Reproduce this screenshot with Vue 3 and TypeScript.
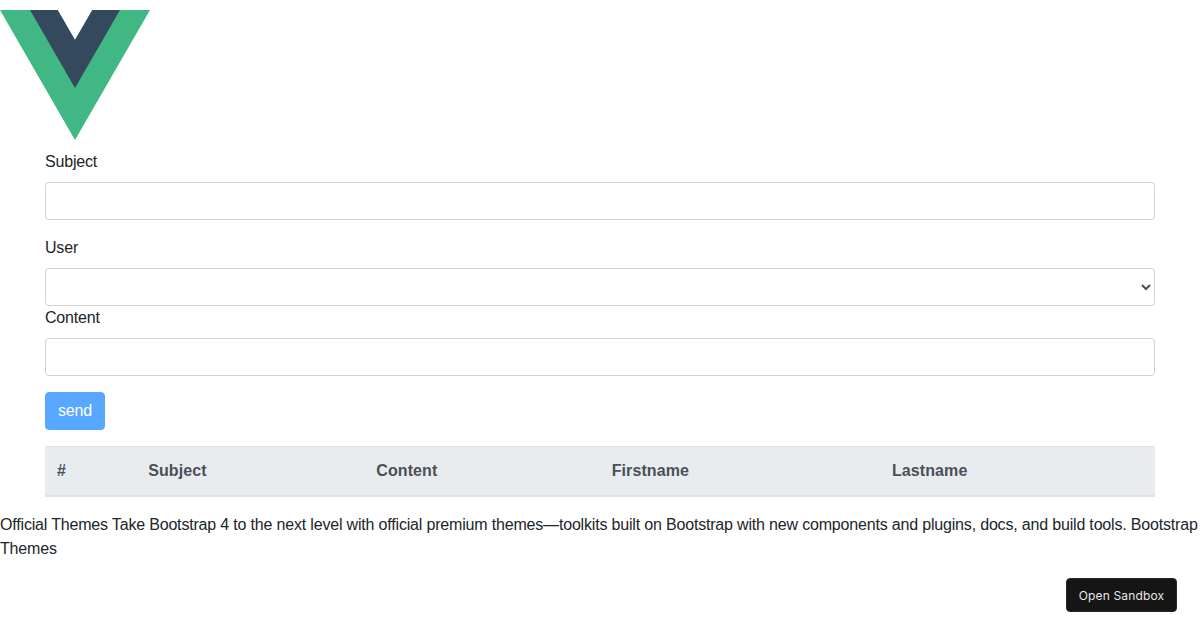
<script setup lang="ts">
const columns: string[] = ['#', 'Subject', 'Content', 'Firstname', 'Lastname']
</script>

<template>
  <div class="page">
    <svg class="logo" viewBox="0 0 261.76 226.69" role="img" aria-label="Vue logo">
      <path d="M161.096.001l-30.225 52.351L100.647.001H-.005l130.877 226.688L261.749.001z" fill="#41b883" />
      <path d="M161.096.001l-30.225 52.351L100.647.001H52.346l78.526 136.01L209.398.001z" fill="#34495e" />
    </svg>

    <div class="container">
      <form @submit.prevent>
        <div class="form-group">
          <label for="subject">Subject</label>
          <input id="subject" class="control" type="text" />
        </div>
        <label for="user">User</label>
        <select id="user" class="control"></select>
        <div class="form-group">
          <label for="content">Content</label>
          <input id="content" class="control" type="text" />
        </div>
        <button class="send" type="submit" disabled>send</button>
      </form>

      <table class="table">
        <thead>
          <tr>
            <th v-for="column in columns" :key="column">{{ column }}</th>
          </tr>
        </thead>
      </table>
    </div>

    <p class="note">Official Themes Take Bootstrap 4 to the next level with official premium themes—toolkits built on Bootstrap with new components and plugins, docs, and build tools. Bootstrap Themes</p>

    <button class="sandbox" type="button">Open Sandbox</button>
  </div>
</template>

<style>
html, body {
  margin: 0;
  background: #fff;
}
</style>

<style scoped>
.page {
  font-family: "Liberation Sans", Arial, sans-serif;
  font-size: 16px;
  line-height: 1.5;
  color: #212529;
  letter-spacing: -0.18px;
}

.logo {
  display: block;
  width: 150px;
  height: 150px;
}

.container {
  width: 1110px;
  margin: 0 auto;
}

.form-group {
  margin-bottom: 16px;
}

label {
  display: block;
  margin-bottom: 8px;
}

.control {
  display: block;
  box-sizing: border-box;
  width: 100%;
  height: 38px;
  padding: 6px 12px;
  font-family: inherit;
  font-size: 16px;
  line-height: 1.5;
  color: #495057;
  background: #fff;
  border: 1px solid #ced4da;
  border-radius: 4px;
}

.send {
  display: block;
  box-sizing: border-box;
  height: 38px;
  padding: 6px 12px;
  font-family: inherit;
  font-size: 16px;
  line-height: 1.5;
  letter-spacing: -0.21px;
  color: #fff;
  background: #007bff;
  border: 1px solid #007bff;
  border-radius: 4px;
  opacity: 0.65;
}

.table {
  width: 100%;
  margin: 16px 0;
  border-collapse: collapse;
  color: #212529;
}

th {
  padding: 12px;
  text-align: left;
  font-weight: 700;
  letter-spacing: 0.1px;
  color: #495057;
  background: #e9ecef;
  border-top: 1px solid #dee2e6;
  border-bottom: 2px solid #dee2e6;
}

.note {
  margin: 0 0 16px;
}

.sandbox {
  position: fixed;
  right: 23px;
  bottom: 18px;
  box-sizing: border-box;
  width: 111px;
  height: 34px;
  padding: 0;
  font-family: Inter, sans-serif;
  font-size: 12px;
  letter-spacing: 0.15px;
  color: #e8e8e8;
  background: #151515;
  border: 1px solid #2a2a2a;
  border-radius: 4px;
}
</style>
